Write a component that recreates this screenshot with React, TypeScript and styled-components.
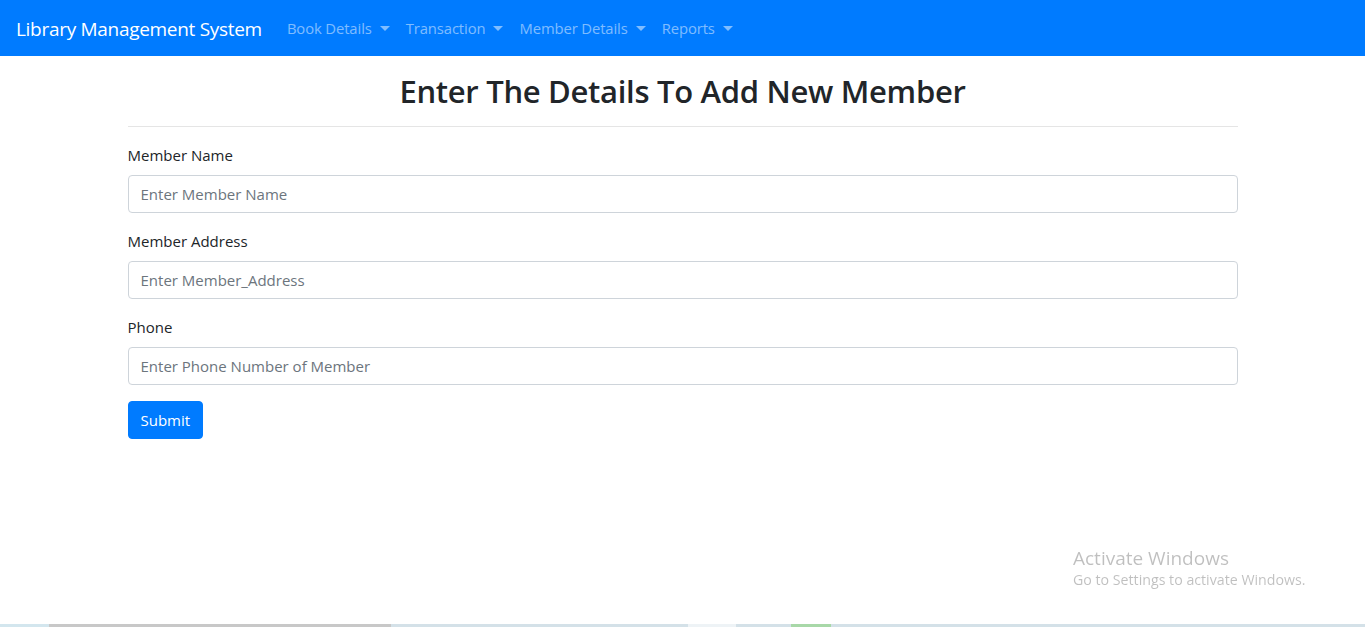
import styled, { createGlobalStyle } from "styled-components";

const GlobalStyle = createGlobalStyle`
  html, body {
    margin: 0;
    padding: 0;
  }
  body {
    font-family: "Open Sans", "Noto Sans", sans-serif;
    font-size: 16px;
    line-height: 1.5;
    color: #212529;
    background: #fff;
  }
  * {
    box-sizing: border-box;
  }
`;

const Page = styled.div`
  min-height: 100vh;
  display: flex;
  flex-direction: column;
`;

const Navbar = styled.nav`
  height: 56px;
  background: #007bff;
  display: flex;
  align-items: center;
  padding: 0 16px;
`;

const Brand = styled.a`
  color: #fff;
  font-size: 19px;
  margin-right: 17px;
  padding-top: 3px;
  white-space: nowrap;
  text-decoration: none;
  letter-spacing: -0.3px;
`;

const NavList = styled.ul`
  display: flex;
  list-style: none;
  margin: 0;
  padding: 0;
`;

const NavLink = styled.a`
  display: flex;
  align-items: center;
  padding: 8px;
  color: rgba(255, 255, 255, 0.5);
  font-size: 14.8px;
  letter-spacing: -0.1px;
  text-decoration: none;
  cursor: pointer;
  &::after {
    content: "";
    margin-left: 8px;
    border-top: 5px solid;
    border-left: 5px solid transparent;
    border-right: 5px solid transparent;
  }
`;

const Main = styled.main`
  flex: 1;
`;

const Container = styled.div`
  width: 1140px;
  margin: 0 auto;
  padding: 0 15px;
`;

const Title = styled.h2`
  margin: 0;
  padding-top: 17px;
  text-align: center;
  font-size: 31px;
  font-weight: 600;
  line-height: 1.2;
  letter-spacing: -0.3px;
`;

const Rule = styled.hr`
  margin: 16px 0 16px;
  border: 0;
  border-top: 1px solid rgba(0, 0, 0, 0.1);
`;

const FormGroup = styled.div`
  margin-bottom: 16px;
`;

const Label = styled.label`
  display: inline-block;
  margin-bottom: 8px;
  font-size: 15px;
  line-height: 24px;
`;

const Input = styled.input`
  display: block;
  width: 100%;
  height: 38px;
  padding: 6px 12px;
  font-family: inherit;
  font-size: 15px;
  color: #495057;
  border: 1px solid #ced4da;
  border-radius: 4px;
  &::placeholder {
    color: #6c757d;
  }
`;

const Button = styled.button`
  height: 38px;
  padding: 0 12px;
  font-family: inherit;
  font-size: 15px;
  color: #fff;
  background: #007bff;
  border: 1px solid #007bff;
  border-radius: 4px;
`;

const Watermark = styled.div`
  position: fixed;
  left: 1073px;
  top: 547px;
  color: rgba(0, 0, 0, 0.25);
  font-family: "Open Sans", "Noto Sans", sans-serif;
  line-height: 1.2;
`;

const WatermarkTitle = styled.div`
  font-size: 19px;
`;

const WatermarkText = styled.div`
  font-size: 14.2px;
  margin-top: 1px;
`;

const Taskbar = styled.div`
  height: 3px;
  display: flex;
`;

const Segment = styled.div<{ $w: number; $c: string }>`
  width: ${(p) => p.$w}px;
  background: ${(p) => p.$c};
`;

const fields = [
  { label: "Member Name", placeholder: "Enter Member Name" },
  { label: "Member Address", placeholder: "Enter Member_Address" },
  { label: "Phone", placeholder: "Enter Phone Number of Member" },
];

const menus = ["Book Details", "Transaction", "Member Details", "Reports"];

const segments = [
  { w: 49, c: "#d3e6ee" },
  { w: 342, c: "#c8c8c8" },
  { w: 297, c: "#d4e1e8" },
  { w: 48, c: "#eef3f6" },
  { w: 55, c: "#d4e1e8" },
  { w: 40, c: "#a8d8a8" },
  { w: 534, c: "#d4e1e8" },
];

export default function App() {
  return (
    <Page>
      <GlobalStyle />
      <Navbar>
        <Brand>Library Management System</Brand>
        <NavList>
          {menus.map((m) => (
            <li key={m}>
              <NavLink>{m}</NavLink>
            </li>
          ))}
        </NavList>
      </Navbar>
      <Main>
        <Container>
          <Title>Enter The Details To Add New Member</Title>
          <Rule />
          <form onSubmit={(e) => e.preventDefault()}>
            {fields.map((f) => (
              <FormGroup key={f.label}>
                <Label>{f.label}</Label>
                <Input placeholder={f.placeholder} />
              </FormGroup>
            ))}
            <Button type="submit">Submit</Button>
          </form>
        </Container>
      </Main>
      <Taskbar>
        {segments.map((s, i) => (
          <Segment key={i} $w={s.w} $c={s.c} />
        ))}
      </Taskbar>
      <Watermark>
        <WatermarkTitle>Activate Windows</WatermarkTitle>
        <WatermarkText>Go to Settings to activate Windows.</WatermarkText>
      </Watermark>
    </Page>
  );
}
